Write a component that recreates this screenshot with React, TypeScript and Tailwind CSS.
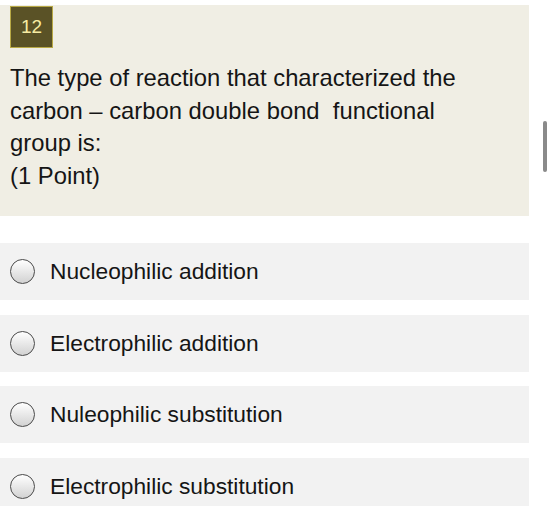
import React from "react";

const options = [
  "Nucleophilic addition",
  "Electrophilic addition",
  "Nuleophilic substitution",
  "Electrophilic substitution",
];

function Radio() {
  return (
    <span className="block w-[25px] h-[25px] shrink-0 rounded-full border-[1.5px] border-[#4a4a4a] bg-gradient-to-b from-[#ffffff] to-[#d2d2d2]" />
  );
}

export default function App() {
  return (
    <div
      className="relative w-[551px] h-[506px] overflow-hidden bg-white text-[#151515]"
      style={{ fontFamily: '"Liberation Sans", Arial, Helvetica, sans-serif' }}
    >
      <div className="pt-[5px] w-[529px]">
        <div className="h-[211px] bg-[#f0eee4] pl-[10px] pt-[1px]">
          <div className="w-[43px] h-[42px] bg-[#5a5226] border border-[#b8a945] flex items-center justify-center text-[19px] text-[#f6eca2]">
            12
          </div>
          <div className="mt-[14px] text-[23.8px] leading-[32.6px]">
            <div>The type of reaction that characterized the</div>
            <div>carbon – carbon double bond&nbsp; functional</div>
            <div>group is:</div>
            <div>(1 Point)</div>
          </div>
        </div>
        <div className="mt-[27px] flex flex-col gap-[14.5px]">
          {options.map((o) => (
            <div
              key={o}
              className="h-[57px] bg-[#f2f2f2] flex items-center pl-[10px] gap-[15px]"
            >
              <Radio />
              <span className="text-[22.75px] leading-none">{o}</span>
            </div>
          ))}
        </div>
      </div>
      <div className="absolute left-[543px] top-[121px] w-[4px] h-[51px] rounded-full bg-[#8a8a8a]" />
    </div>
  );
}
